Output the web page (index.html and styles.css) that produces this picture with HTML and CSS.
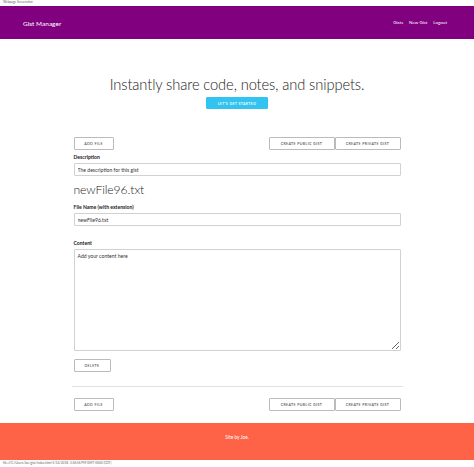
FILE: index.html
```html
<!DOCTYPE html>
<html lang="en">
<head>
  <meta charset="UTF-8">
  <meta name="viewport" content="width=device-width, initial-scale=1.0">
  <title>Gist Manager</title>
  <link rel="stylesheet" href="styles.css">
</head>
<body>
  <div class="shot-caption">Webpage Screenshot</div>

  <header class="topbar">
    <a class="brand" href="#">Gist Manager</a>
    <nav class="nav">
      <a href="#">Gists</a>
      <a href="#">New Gist</a>
      <a href="#">Logout</a>
    </nav>
  </header>

  <main class="main">
    <section class="hero">
      <h1>Instantly share code, notes, and snippets.</h1>
      <button class="button button-primary">Let's get started</button>
    </section>

    <div class="container">
      <div class="actions">
        <button class="button">Add file</button>
        <div class="group">
          <button class="button">Create public gist</button>
          <button class="button">Create private gist</button>
        </div>
      </div>

      <label class="label label-first" for="description">Description</label>
      <input class="field" id="description" type="text" value="The description for this gist">

      <div class="file">
        <h2 class="file-title">newFile96.txt</h2>
        <label class="label" for="filename">File Name (with extension)</label>
        <input class="field" id="filename" type="text" value="newFile96.txt">

        <label class="label label-content" for="content">Content</label>
        <textarea class="field content" id="content">Add your content here</textarea>

        <button class="button delete">Delete</button>
      </div>

      <hr class="divider">

      <div class="actions">
        <button class="button">Add file</button>
        <div class="group">
          <button class="button">Create public gist</button>
          <button class="button">Create private gist</button>
        </div>
      </div>
    </div>
  </main>

  <footer class="footer">Site by Joe.</footer>
  <div class="shot-caption bottom">file:///C:/Users/Joe/gist/index.html 5/14/2018, 3:36:56 PM GMT-0500 (CDT)</div>
</body>
</html>
```

FILE: styles.css
```css
body {
  margin: 0;
  padding: 0;
  background-color: #fff;
  font-family: Lato, 'Open Sans', sans-serif;
  color: #222;
}

.shot-caption {
  height: 6px;
  padding-left: 3px;
  font-size: 3.2px;
  line-height: 5px;
  color: #666;
  white-space: nowrap;
  overflow: hidden;
}

.shot-caption.bottom {
  height: 7px;
  line-height: 7px;
}

.topbar {
  height: 33px;
  background-color: #800080;
  display: flex;
  align-items: center;
  justify-content: space-between;
  padding: 0 27px 0 23px;
}

.brand {
  color: #fff;
  text-decoration: none;
  font-size: 6.5px;
  margin-top: 2px;
}

.nav {
  display: flex;
  gap: 6px;
}

.nav a {
  color: #fff;
  text-decoration: none;
  font-size: 4.5px;
}

.main {
  padding-bottom: 12px;
}

.hero {
  display: flex;
  flex-direction: column;
  align-items: center;
  padding-top: 35px;
}

.hero h1 {
  font-size: 14.7px;
  font-weight: 300;
  line-height: 20px;
  margin: 0 0 3px;
  color: #222;
  letter-spacing: -0.1px;
}

.button {
  box-sizing: border-box;
  height: 13px;
  padding: 0 10px;
  background: #fff;
  border: 1px solid #bbb;
  border-radius: 1px;
  color: #555;
  font-family: Lato, 'Open Sans', sans-serif;
  font-size: 3.6px;
  font-weight: 600;
  letter-spacing: 0.35px;
  text-transform: uppercase;
  cursor: pointer;
}

.button-primary {
  height: 12px;
  width: 62px;
  padding: 0;
  background-color: #33c3f0;
  border-color: #33c3f0;
  color: #fff;
}

.container {
  width: 327px;
  margin: 28px auto 0;
}

.actions {
  display: flex;
  justify-content: space-between;
}

.actions .button {
  width: 40px;
  padding: 0;
}

.actions .group .button {
  width: 66px;
}

.group {
  display: flex;
}

.label {
  display: block;
  font-size: 5.1px;
  font-weight: 700;
  line-height: 7px;
  margin-bottom: 2.5px;
}

.label-first {
  margin-top: 3.5px;
}

.field {
  display: block;
  box-sizing: border-box;
  width: 100%;
  height: 13px;
  margin: 0;
  padding: 0 3px;
  border: 1px solid #d1d1d1;
  border-radius: 1px;
  font-family: Lato, 'Open Sans', sans-serif;
  font-size: 5.1px;
  color: #333;
}

.file-title {
  font-size: 12.2px;
  font-weight: 300;
  line-height: 15px;
  margin: 5.5px 0 7px;
  letter-spacing: -0.1px;
}

.label-content {
  margin-top: 13.5px;
}

.content {
  height: 102px;
  padding: 3px;
  resize: vertical;
}

.button.delete {
  width: 37px;
  padding: 0;
  margin-top: 7px;
}

.divider {
  border: 0;
  border-top: 1px solid #e1e1e1;
  margin: 14px -2px 11px;
}

.footer {
  box-sizing: border-box;
  height: 37px;
  padding-top: 11px;
  background-color: #ff6347;
  color: #fff;
  text-align: center;
  font-size: 4.8px;
}
```
